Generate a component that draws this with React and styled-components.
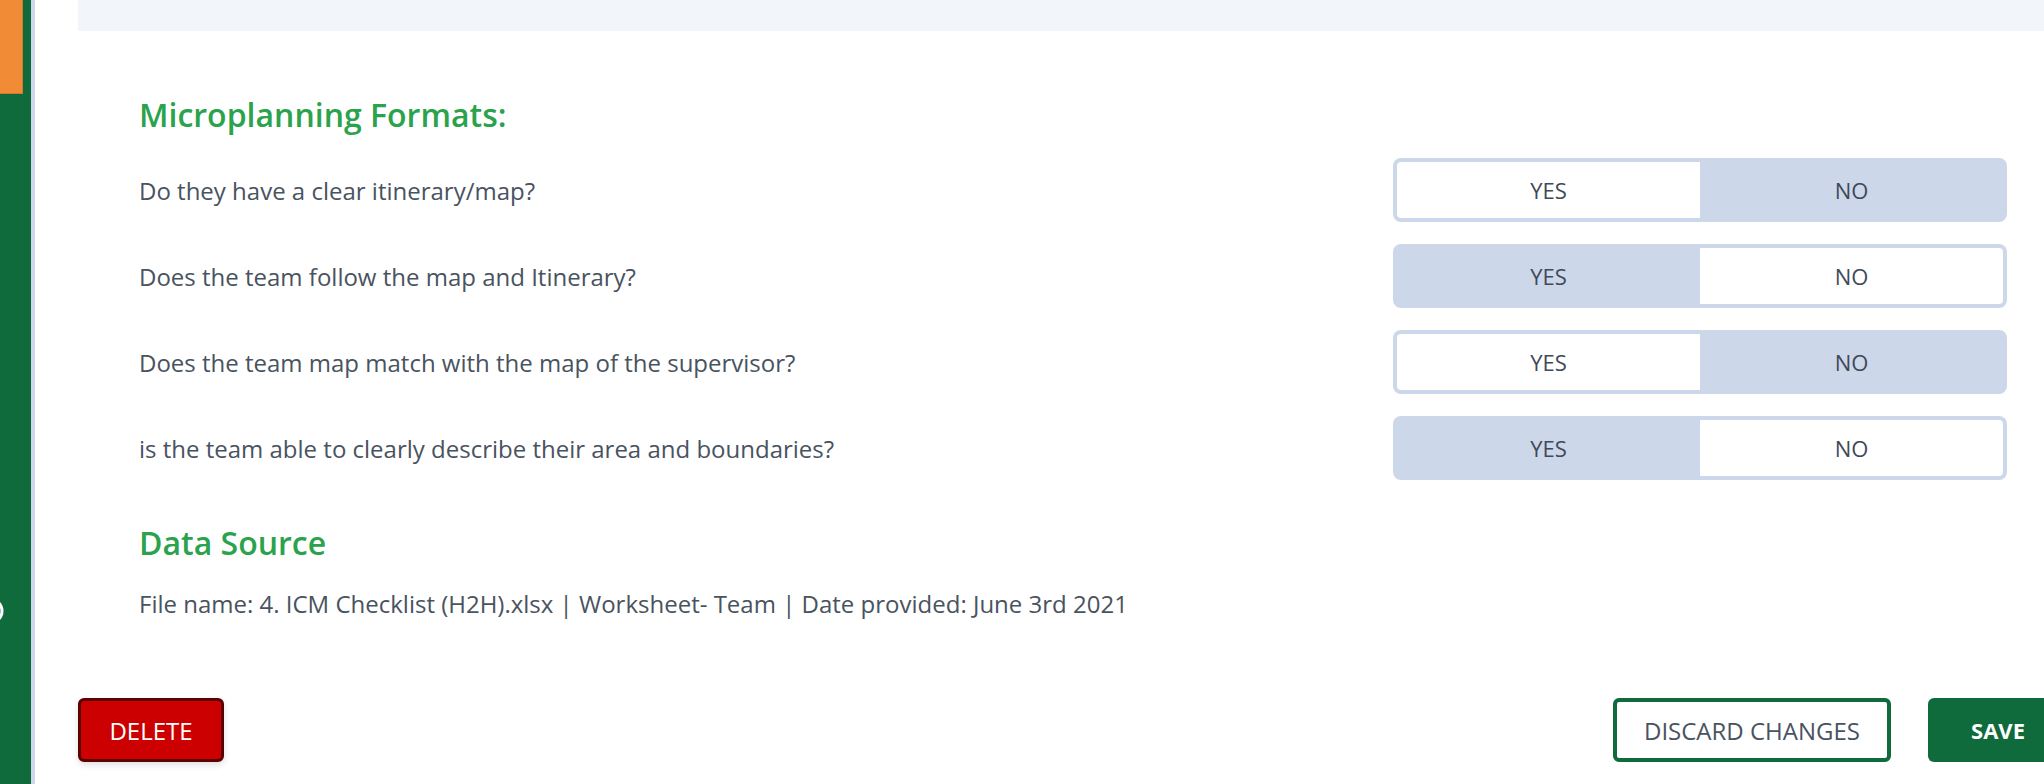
import React from "react";
import styled, { createGlobalStyle } from "styled-components";

const GlobalStyle = createGlobalStyle`
  html, body {
    margin: 0;
    padding: 0;
    background: #ffffff;
    overflow: hidden;
  }
  body {
    font-family: "Open Sans", "Noto Sans", sans-serif;
    color: #495360;
  }
  * { box-sizing: border-box; }
`;

const Page = styled.div`
  display: flex;
  min-height: 784px;
  width: 2044px;
  overflow: hidden;
`;

const Sidebar = styled.aside`
  flex: 0 0 35px;
  display: flex;
  flex-direction: column;
  background: #0f6a3c;
  border-right: 4px solid #cfd8ea;
  min-height: 784px;
`;

const Accent = styled.div`
  width: 23px;
  height: 94px;
  background: #f28b36;
  border-right: 1px solid #d9772a;
  border-bottom: 1px solid #d9772a;
`;

const EdgeIcon = styled.svg`
  display: block;
  margin-top: 502px;
  margin-left: -25px;
  width: 30px;
  height: 30px;
`;

const Main = styled.main`
  flex: 0 0 auto;
  display: flex;
  flex-direction: column;
  padding-left: 43px;
`;

const TopBar = styled.div`
  width: 1990px;
  height: 31px;
  background: #f2f5fa;
`;

const Card = styled.div`
  width: 1990px;
  display: flex;
  flex-direction: column;
`;

const Section = styled.section`
  display: flex;
  flex-direction: column;
  padding: 0 61px;
`;

const Heading = styled.h2`
  margin: ${(p) => p.$top}px 0 0;
  font-size: 32px;
  line-height: 44px;
  font-weight: 600;
  color: #2ba24c;
`;

const QuestionList = styled.div`
  display: flex;
  flex-direction: column;
  gap: 22px;
  margin-top: 21px;
`;

const Row = styled.div`
  display: flex;
  align-items: center;
  justify-content: space-between;
  height: 64px;
`;

const Question = styled.p`
  margin: 0;
  font-size: 24px;
  line-height: 33px;
  color: #495360;
`;

const Toggle = styled.div`
  width: 614px;
  height: 64px;
  padding: 4px;
  display: grid;
  grid-template-columns: 1fr 1fr;
  background: #cdd7ea;
  border-radius: 8px;
`;

const Segment = styled.button`
  border: none;
  margin: 0;
  padding: 0;
  font-family: inherit;
  font-size: 22px;
  color: #3f4957;
  background: ${(p) => (p.$selected ? "transparent" : "#ffffff")};
  border-radius: ${(p) => (p.$side === "left" ? "4px 0 0 4px" : "0 4px 4px 0")};
  cursor: pointer;
`;

const DataText = styled.p`
  margin: 22px 0 0;
  font-size: 24px;
  line-height: 33px;
  color: #495360;
`;

const Footer = styled.div`
  display: flex;
  justify-content: space-between;
  align-items: center;
  margin-top: 78px;
`;

const Actions = styled.div`
  display: flex;
  gap: 37px;
`;

const Button = styled.button`
  height: 64px;
  margin: 0;
  padding: 0;
  font-family: inherit;
  font-size: 24px;
  border-radius: 6px;
  cursor: pointer;
  text-align: center;
`;

const DeleteButton = styled(Button)`
  width: 146px;
  background: #cc0000;
  color: #ffffff;
  border: 3px solid #5a0202;
  box-shadow: 0 3px 6px rgba(0, 0, 0, 0.12);
`;

const DiscardButton = styled(Button)`
  width: 278px;
  background: #ffffff;
  color: #495360;
  border: 4px solid #0f6a3c;
`;

const SaveButton = styled(Button)`
  width: 140px;
  background: #0f6a3c;
  color: #ffffff;
  border: none;
  font-size: 22px;
  font-weight: 700;
`;

const questions = [
  { text: "Do they have a clear itinerary/map?", value: "no" },
  { text: "Does the team follow the map and Itinerary?", value: "yes" },
  { text: "Does the team map match with the map of the supervisor?", value: "no" },
  { text: "is the team able to clearly describe their area and boundaries?", value: "yes" },
];

export default function App() {
  return (
    <>
      <GlobalStyle />
      <Page>
        <Sidebar>
          <Accent />
          <EdgeIcon viewBox="0 0 30 30">
            <circle cx="15" cy="15" r="12" fill="#1b7c8a" stroke="#ffffff" strokeWidth="3" />
          </EdgeIcon>
        </Sidebar>
        <Main>
          <TopBar />
          <Card>
            <Section>
              <Heading $top={62}>Microplanning Formats:</Heading>
              <QuestionList>
                {questions.map((q) => (
                  <Row key={q.text}>
                    <Question>{q.text}</Question>
                    <Toggle>
                      <Segment $side="left" $selected={q.value === "yes"}>YES</Segment>
                      <Segment $side="right" $selected={q.value === "no"}>NO</Segment>
                    </Toggle>
                  </Row>
                ))}
              </QuestionList>
              <Heading $top={41}>Data Source</Heading>
              <DataText>
                File name: 4. ICM Checklist (H2H).xlsx | Worksheet- Team | Date provided: June 3rd 2021
              </DataText>
            </Section>
            <Footer>
              <DeleteButton>DELETE</DeleteButton>
              <Actions>
                <DiscardButton>DISCARD CHANGES</DiscardButton>
                <SaveButton>SAVE</SaveButton>
              </Actions>
            </Footer>
          </Card>
        </Main>
      </Page>
    </>
  );
}
